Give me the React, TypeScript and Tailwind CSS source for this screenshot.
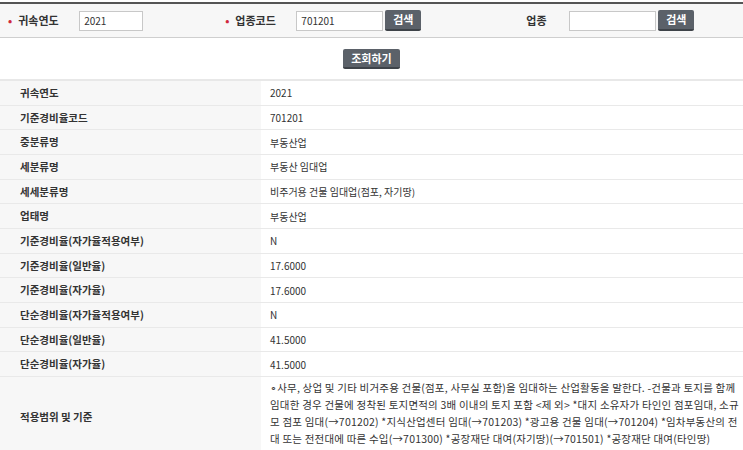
import React from "react";

const rows: [string, string][] = [
  ["귀속연도", "2021"],
  ["기준경비율코드", "701201"],
  ["중분류명", "부동산업"],
  ["세분류명", "부동산 임대업"],
  ["세세분류명", "비주거용 건물 임대업(점포, 자기땅)"],
  ["업태명", "부동산업"],
  ["기준경비율(자가율적용여부)", "N"],
  ["기준경비율(일반율)", "17.6000"],
  ["기준경비율(자가율)", "17.6000"],
  ["단순경비율(자가율적용여부)", "N"],
  ["단순경비율(일반율)", "41.5000"],
  ["단순경비율(자가율)", "41.5000"],
];

const Btn = ({ t, cls = "" }: { t: string; cls?: string }) => (
  <div className={"flex items-center justify-center rounded-[2px] bg-[#5b6169] text-white font-bold text-[11px] border-b-2 border-[#3e4349] " + cls}>{t}</div>
);

const Input = ({ v, w }: { v: string; w: string }) => (
  <div className={"h-[20px] border border-[#c8c8c8] bg-white text-[10px] font-normal text-[#333] pl-[4px] flex items-center " + w}>{v}</div>
);

export default function App() {
  return (
    <div className="w-[743px] h-[450px] overflow-hidden bg-white text-[#333]" style={{ fontFamily: '"Noto Sans CJK KR", "Noto Sans", sans-serif' }}>
      <div className="h-[2px]" />
      <div className="h-[36px] bg-[#f7f7f7] border-t-2 border-[#555] border-b border-b-[#cfcfcf] flex items-center text-[11px] font-bold">
        <span className="text-[#d0283c] ml-[8px] mr-[6px]">•</span>
        <span className="w-[61px]">귀속연도</span>
        <Input v="2021" w="w-[64px]" />
        <span className="text-[#d0283c] ml-[82px] mr-[6px]">•</span>
        <span className="w-[61px]">업종코드</span>
        <Input v="701201" w="w-[87px]" />
        <Btn t="검색" cls="ml-[2px] w-[36px] h-[21px]" />
        <span className="ml-[105px] w-[43px]">업종</span>
        <Input v="" w="w-[87px]" />
        <Btn t="검색" cls="ml-[2px] w-[36px] h-[21px]" />
      </div>
      <div className="flex justify-center pt-[11px] pb-[10px]">
        <Btn t="조회하기" cls="w-[57px] h-[20px]" />
      </div>
      <div className="border-t-2 border-[#e8e8e8]">
        {rows.map(([k, v]) => (
          <div key={k} className="flex h-[24.67px] border-b border-[#e9e9e9]">
            <div className="w-[261px] bg-[#f7f7f7] pl-[20px] flex items-center text-[10.5px] font-bold">{k}</div>
            <div className="flex-1 pl-[9px] flex items-center text-[10px]">{v}</div>
          </div>
        ))}
        <div className="flex h-[80px]">
          <div className="w-[261px] bg-[#f7f7f7] pl-[20px] flex items-center text-[10.5px] font-bold">적용범위 및 기준</div>
          <div className="flex-1 pl-[9px] pr-[4px] pt-[2px] text-[10.5px] leading-[17px] tracking-[0.2px]">
            ∘사무, 상업 및 기타 비거주용 건물(점포, 사무실 포함)을 임대하는 산업활동을 말한다. -건물과 토지를 함께 임대한 경우 건물에 정착된 토지면적의 3배 이내의 토지 포함 &lt;제 외&gt; *대지 소유자가 타인인 점포임대, 소규모 점포 임대(→701202) *지식산업센터 임대(→701203) *광고용 건물 임대(→701204) *임차부동산의 전대 또는 전전대에 따른 수입(→701300) *공장재단 대여(자기땅)(→701501) *공장재단 대여(타인땅)(→701502) *극장임대(→921404)
          </div>
        </div>
      </div>
    </div>
  );
}
